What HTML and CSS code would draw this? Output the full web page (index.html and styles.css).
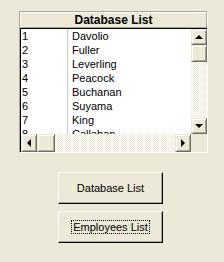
FILE: index.html
```html
<!DOCTYPE html>
<html lang="en">
<head>
    <meta charset="UTF-8">
    <title>Database List</title>
    <link rel="stylesheet" href="styles.css">
</head>
<body>

<div class="dbgrid">
    <div class="caption">Database List</div>
    <div class="grid-body">
        <div class="rows">
            <div class="row"><span class="num">1</span><span class="name">Davolio</span></div>
            <div class="row"><span class="num">2</span><span class="name">Fuller</span></div>
            <div class="row"><span class="num">3</span><span class="name">Leverling</span></div>
            <div class="row"><span class="num">4</span><span class="name">Peacock</span></div>
            <div class="row"><span class="num">5</span><span class="name">Buchanan</span></div>
            <div class="row"><span class="num">6</span><span class="name">Suyama</span></div>
            <div class="row"><span class="num">7</span><span class="name">King</span></div>
            <div class="row"><span class="num">8</span><span class="name">Callahan</span></div>
        </div>
        <div class="vscroll">
            <div class="sbtn"><span class="arrow up"></span></div>
            <div class="sbtn thumb"></div>
            <div class="track"></div>
            <div class="sbtn"><span class="arrow down"></span></div>
        </div>
        <div class="hscroll">
            <div class="sbtn"><span class="arrow left"></span></div>
            <div class="sbtn thumb"></div>
            <div class="track"></div>
            <div class="sbtn"><span class="arrow right"></span></div>
        </div>
        <div class="corner"></div>
    </div>
</div>

<div class="actions">
    <button type="button" class="btn">Database List</button>
    <button type="button" class="btn"><span class="focus">Employees List</span></button>
</div>

</body>
</html>
```

FILE: styles.css
```css
body {
    margin: 0;
    background: #ece9d8;
    font-family: "Liberation Sans", Arial, sans-serif;
    font-size: 11px;
    color: #000;
}
.dbgrid {
    box-sizing: border-box;
    width: 189px;
    height: 142px;
    margin: 11px 0 0 19px;
    border: 1px solid;
    border-color: #aca899 #fff #fff #aca899;
    display: flex;
    flex-direction: column;
}
.caption {
    box-sizing: border-box;
    height: 16px;
    border: 1px solid;
    border-color: #fff #aca899 #aca899 #fff;
    font-weight: bold;
    font-size: 12px;
    line-height: 14px;
    text-align: center;
}
.grid-body {
    flex: 1;
    min-height: 0;
    display: grid;
    grid-template-columns: 1fr 16px;
    grid-template-rows: 1fr 18px;
    border-top: 1px solid #000;
    border-left: 1px solid #000;
    background: #fff;
}
.rows {
    overflow: hidden;
}
.row {
    display: flex;
    height: 14px;
    line-height: 14px;
}
.num {
    width: 45px;
    padding-left: 1px;
    border-right: 1px solid #c8c8c8;
}
.name {
    padding-left: 4px;
}
.vscroll, .hscroll {
    display: flex;
}
.vscroll {
    flex-direction: column;
}
.sbtn {
    box-sizing: border-box;
    flex: none;
    width: 16px;
    height: 16px;
    background: #ece9d8;
    border: 1px solid;
    border-color: #ece9d8 #716f64 #716f64 #ece9d8;
    box-shadow: inset 1px 1px #fff, inset -1px -1px #aca899;
    display: flex;
    align-items: center;
    justify-content: center;
}
.vscroll .thumb {
    height: 17px;
}
.hscroll .sbtn {
    height: 18px;
}
.hscroll .thumb {
    width: 18px;
}
.track {
    flex: 1;
    background: repeating-conic-gradient(#ece9d8 0 25%, #fff 0 50%) 0 0 / 2px 2px;
}
.corner {
    background: #ece9d8;
}
.arrow {
    width: 0;
    height: 0;
    border: 4px solid transparent;
}
.arrow.up {
    border-top: 0;
    border-bottom-color: #000;
}
.arrow.down {
    border-bottom: 0;
    border-top-color: #000;
}
.arrow.left {
    border-left: 0;
    border-right-color: #000;
}
.arrow.right {
    border-right: 0;
    border-left-color: #000;
}
.actions {
    display: flex;
    flex-direction: column;
    gap: 7px;
    width: 105px;
    margin: 19px 0 0 58px;
}
.btn {
    box-sizing: border-box;
    height: 32px;
    padding: 0;
    background: #ece9d8;
    border: 1px solid;
    border-color: #fff #000 #000 #fff;
    box-shadow: inset -1px -1px #aca899;
    font-family: "Liberation Sans", Arial, sans-serif;
    font-size: 11px;
    color: #000;
}
.focus {
    border: 1px dotted #000;
    padding: 0 1px;
    line-height: 12px;
    display: inline-block;
}
```
